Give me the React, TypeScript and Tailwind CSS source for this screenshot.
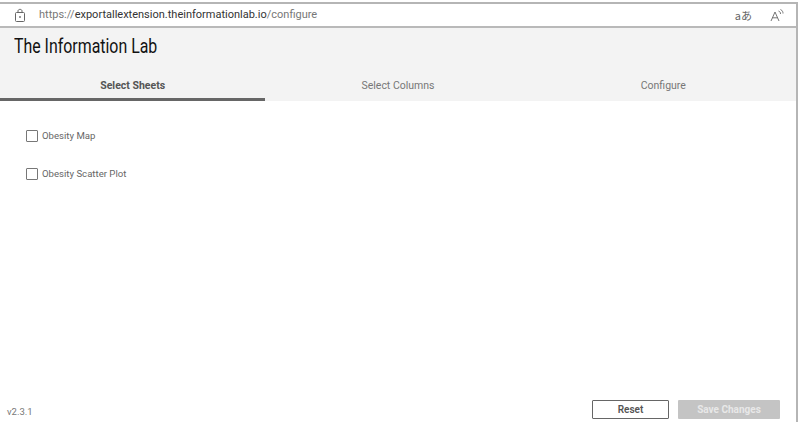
const tabs = ['Select Sheets', 'Select Columns', 'Configure'];
const sheets = ['Obesity Map', 'Obesity Scatter Plot'];

export default function App() {
  return (
    <div className="w-[800px] h-[422px] flex flex-col overflow-hidden bg-white font-['Roboto',sans-serif]">
      <div className="mt-[2px] w-[798px] flex-1 min-h-0 flex flex-col border-t-2 border-r-2 border-[#b5b5b5]">
        {/* Browser address bar */}
        <div className="h-[24px] shrink-0 flex items-center border-b-2 border-[#b9b9b9] bg-white">
          <svg className="ml-[15px]" width="10" height="14" viewBox="0 0 10 14" fill="none" stroke="#666666" strokeWidth="1">
            <path d="M3 5 V3 C3 0.8 7 0.8 7 3 V5" />
            <rect x="0.5" y="4.5" width="9" height="9" rx="1" />
            <rect x="4.2" y="8.2" width="1.6" height="1.6" fill="#666666" stroke="none" />
          </svg>
          <span className="ml-[14px] pt-[1px] text-[11px] text-[#777777]">
            https://<span className="text-[#333333]">exportallextension.theinformationlab.io</span>/configure
          </span>
          <div className="ml-auto flex items-center gap-[18px] pr-[12px] text-[#666666]">
            <span className="text-[11px] font-['Noto_Sans_CJK_JP',sans-serif]">aあ</span>
            <svg width="14" height="14" viewBox="0 0 14 14" fill="none" stroke="#666666" strokeWidth="0.9">
              <path d="M1 13 L5 4 L9 13 M2.4 9.8 H7.6" />
              <path d="M8.5 3 C10 3.5 10.5 4.5 10.5 6 M10.5 1.5 C12.5 2.5 13 4 13 5.5" />
            </svg>
          </div>
        </div>

        {/* Page header */}
        <div className="h-[73px] shrink-0 flex flex-col bg-[#f3f3f3]">
          <h1 className="ml-[14px] mt-[5px] origin-left scale-x-[0.757] whitespace-nowrap text-[21px] leading-[26px] text-[#111111]">
            The Information Lab
          </h1>
          <div className="mt-auto grid grid-cols-3">
            {tabs.map((tab, i) => (
              <div
                key={tab}
                className={`h-[31px] pt-[4px] flex items-center justify-center text-[10.5px] border-b-[3px] ${
                  i === 0 ? 'font-bold text-[#555555] border-[#666666]' : 'text-[#777777] border-transparent'
                }`}
              >
                {tab}
              </div>
            ))}
          </div>
        </div>

        {/* Sheet list */}
        <div className="flex-1 min-h-0 flex flex-col gap-[26px] pl-[26px] pt-[29px]">
          {sheets.map((sheet) => (
            <label key={sheet} className="flex items-center gap-[4px] h-[12px] text-[9.6px] text-[#666666]">
              <span className="w-[12px] h-[12px] rounded-[1px] border border-[#777777] bg-white" />
              {sheet}
            </label>
          ))}
        </div>

        {/* Footer */}
        <div className="h-[32px] shrink-0 flex items-start pl-[7px] pr-[16px]">
          <span className="text-[9.5px] text-[#777777] mt-[15px]">v2.3.1</span>
          <button className="ml-auto mt-[10px] w-[77px] h-[19px] rounded-[1px] border border-[#666666] bg-white text-[10px] font-semibold text-[#555555]">
            Reset
          </button>
          <button className="ml-[9px] mt-[10px] w-[102px] h-[19px] rounded-[1px] bg-[#c4c4c4] text-[10px] font-bold text-[#e8e8e8]">
            Save Changes
          </button>
        </div>
      </div>
    </div>
  );
}
